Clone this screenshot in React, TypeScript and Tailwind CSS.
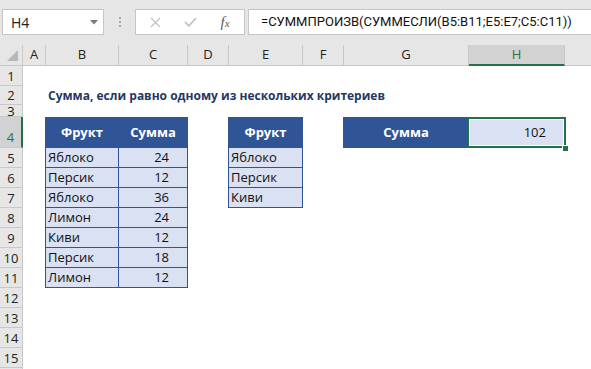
import React from "react";

const colHeaders: { label: string; w: string; sel?: boolean }[] = [
  { label: "A", w: "w-[23px]" },
  { label: "B", w: "w-[73px]" },
  { label: "C", w: "w-[69px]" },
  { label: "D", w: "w-[41px]" },
  { label: "E", w: "w-[74px]" },
  { label: "F", w: "w-[41px]" },
  { label: "G", w: "w-[125px]" },
  { label: "H", w: "w-[96px]", sel: true },
];

const rowHeaders: { n: number; h: string; sel?: boolean }[] = [
  { n: 1, h: "h-[20px]" },
  { n: 2, h: "h-[19px]" },
  { n: 3, h: "h-[12px]" },
  { n: 4, h: "h-[31px]", sel: true },
  { n: 5, h: "h-[20px]" },
  { n: 6, h: "h-[20px]" },
  { n: 7, h: "h-[20px]" },
  { n: 8, h: "h-[20px]" },
  { n: 9, h: "h-[20px]" },
  { n: 10, h: "h-[20px]" },
  { n: 11, h: "h-[20px]" },
  { n: 12, h: "h-[20px]" },
  { n: 13, h: "h-[20px]" },
  { n: 14, h: "h-[20px]" },
  { n: 15, h: "h-[20px]" },
  { n: 16, h: "h-[20px]" },
];

const data: [string, number][] = [
  ["Яблоко", 24],
  ["Персик", 12],
  ["Яблоко", 36],
  ["Лимон", 24],
  ["Киви", 12],
  ["Персик", 18],
  ["Лимон", 12],
];

const criteria = ["Яблоко", "Персик", "Киви"];

function TopBar() {
  return (
    <div className="h-[45px] bg-[#e6e6e6] flex items-start pt-[9px] pl-[2px]">
      <div className="w-[102px] h-[26px] bg-white border border-[#c6c6c6] flex items-center justify-between pl-[8px] pr-[5px]">
        <span className="text-[14px] text-[#222]">H4</span>
        <svg width="8" height="5" viewBox="0 0 8 5">
          <path d="M0 0H8L4 4.5Z" fill="#7a7a7a" />
        </svg>
      </div>
      <div className="w-[31px] h-[26px] flex flex-col items-center justify-center gap-[2px]">
        <div className="w-[2px] h-[2px] bg-[#a8a8a8]" />
        <div className="w-[2px] h-[2px] bg-[#a8a8a8]" />
        <div className="w-[2px] h-[2px] bg-[#a8a8a8]" />
      </div>
      <div className="w-[110px] h-[26px] bg-white border border-[#c6c6c6] flex items-center">
        <div className="w-[38px] flex justify-center">
          <svg width="11" height="11" viewBox="0 0 11 11">
            <path d="M1 1L10 10M10 1L1 10" stroke="#c4c4c4" strokeWidth="1.4" />
          </svg>
        </div>
        <div className="w-[32px] flex justify-center">
          <svg width="13" height="10" viewBox="0 0 13 10">
            <path d="M1 5L4.8 8.8L12 1.2" stroke="#c4c4c4" strokeWidth="1.8" fill="none" />
          </svg>
        </div>
        <div className="w-[38px] flex justify-center">
          <span className="font-['Liberation_Serif',serif] italic text-[15px] text-[#5a5a5a] leading-none">
            f<span className="text-[11px]">x</span>
          </span>
        </div>
      </div>
      <div className="ml-[3px] flex-1 h-[26px] bg-white border border-[#c6c6c6] border-r-0 flex items-center pl-[12px] overflow-hidden whitespace-nowrap">
        <span className="text-[13px] text-[#111] font-['Roboto',sans-serif]">=СУММПРОИЗВ(СУММЕСЛИ(B5:B11;E5:E7;C5:C11))</span>
      </div>
    </div>
  );
}

function Sheet() {
  return (
    <div className="flex">
      <div className="w-[23px] flex flex-col shrink-0">
        <div className="h-[21px] bg-[#e6e6e6] border-r border-b border-[#c8c8c8] flex items-end justify-end pr-[4px] pb-[4px]">
          <svg width="11" height="11" viewBox="0 0 11 11">
            <path d="M11 0V11H0Z" fill="#b7b7b7" />
          </svg>
        </div>
        {rowHeaders.map((r) =>
          r.sel ? (
            <div
              key={r.n}
              className={`${r.h} bg-[#d2d2d2] border-r-2 border-r-[#217346] border-b border-b-[#c8c8c8] flex items-end justify-center pb-[3px] text-[#217346] text-[13px] leading-none`}
            >
              {r.n}
            </div>
          ) : (
            <div
              key={r.n}
              className={`${r.h} bg-[#e6e6e6] border-r border-b border-[#c8c8c8] flex items-center justify-center text-[#222] text-[13px] leading-none`}
            >
              <span className="leading-[10px]">{r.n}</span>
            </div>
          )
        )}
      </div>
      <div className="flex-1 flex flex-col min-w-0">
        <div className="flex h-[21px]">
          {colHeaders.map((c) =>
            c.sel ? (
              <div
                key={c.label}
                className={`${c.w} shrink-0 bg-[#d2d2d2] border-r border-r-[#c8c8c8] border-b-2 border-b-[#217346] flex items-center justify-center text-[13px] text-[#217346]`}
              >
                {c.label}
              </div>
            ) : (
              <div
                key={c.label}
                className={`${c.w} shrink-0 bg-[#e6e6e6] border-r border-b border-[#c8c8c8] flex items-center justify-center text-[13px] text-[#222]`}
              >
                {c.label}
              </div>
            )
          )}
          <div className="flex-1 bg-[#e6e6e6] border-b border-[#c8c8c8]" />
        </div>
        <div className="grid grid-cols-[23px_73px_69px_41px_74px_41px_125px_96px_1fr] grid-rows-[20px_19px_12px_31px_repeat(12,20px)]">
          <div className="col-start-2 col-span-7 row-start-2 flex items-center pl-[2px] pt-[1px] whitespace-nowrap font-bold text-[12px] text-[#1f3864]">
            Сумма, если равно одному из нескольких критериев
          </div>

          <div className="col-start-2 col-span-2 row-start-4 row-span-8 ml-[-1px] border-l border-t border-[#2f5597] grid grid-cols-[73px_69px] grid-rows-[30px_repeat(7,20px)]">
            <div className="bg-[#2f5597] border-r border-b border-[#2f5597] flex items-center justify-center text-white font-bold text-[13px]">
              Фрукт
            </div>
            <div className="bg-[#2f5597] border-r border-b border-[#2f5597] flex items-center justify-center text-white font-bold text-[13px]">
              Сумма
            </div>
            {data.map(([f, v], i) => (
              <React.Fragment key={i}>
                <div className="bg-[#d9e1f2] border-r border-b border-[#2f5597] flex items-center pl-[2px] text-[13px] text-[#111]">
                  {f}
                </div>
                <div className="bg-[#d9e1f2] border-r border-b border-[#2f5597] flex items-center justify-end pr-[18px] text-[13px] text-[#111]">
                  {v}
                </div>
              </React.Fragment>
            ))}
          </div>

          <div className="col-start-5 row-start-4 row-span-4 ml-[-1px] border-l border-t border-[#2f5597] grid grid-cols-[74px] grid-rows-[30px_repeat(3,20px)]">
            <div className="bg-[#2f5597] border-r border-b border-[#2f5597] flex items-center justify-center text-white font-bold text-[13px]">
              Фрукт
            </div>
            {criteria.map((c) => (
              <div key={c} className="bg-[#d9e1f2] border-r border-b border-[#2f5597] flex items-center pl-[2px] text-[13px] text-[#111]">
                {c}
              </div>
            ))}
          </div>

          <div className="col-start-7 row-start-4 ml-[-1px] bg-[#2f5597] flex items-center justify-center text-white font-bold text-[13px]">
            Сумма
          </div>
          <div className="col-start-8 row-start-4 relative bg-[#d9e1f2] flex items-center justify-end pr-[19px] text-[13px] text-[#111]">
            102
            <div className="absolute left-[-2px] top-0 right-[-1px] bottom-0 border-2 border-[#217346]">
              <div className="absolute inset-0 border border-white" />
            </div>
            <div className="absolute right-[-4px] bottom-[-4px] w-[7px] h-[7px] bg-[#217346] border border-white" />
          </div>
        </div>
      </div>
    </div>
  );
}

export default function App() {
  return (
    <div className="w-[591px] h-[369px] overflow-hidden bg-white font-['Open_Sans',sans-serif] text-[#111]">
      <TopBar />
      <Sheet />
    </div>
  );
}
